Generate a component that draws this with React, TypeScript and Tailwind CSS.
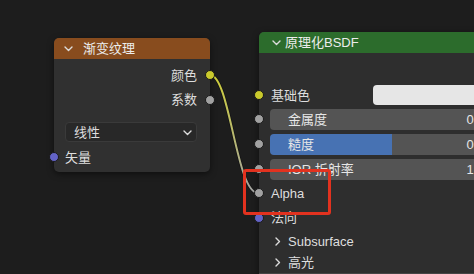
import React from 'react';

const font = { fontFamily: '"Liberation Sans", "Noto Sans CJK SC", sans-serif' };

const Chevron = ({ dir = 'down' }: { dir?: 'down' | 'right' }) => (
  <svg width="9" height="9" viewBox="0 0 9 9" className="shrink-0">
    {dir === 'down' ? (
      <polyline points="1,3 4.5,6.5 8,3" fill="none" stroke="#dcdcdc" strokeWidth="1.4" strokeLinecap="round" strokeLinejoin="round" />
    ) : (
      <polyline points="3,1 6.5,4.5 3,8" fill="none" stroke="#dcdcdc" strokeWidth="1.4" strokeLinecap="round" strokeLinejoin="round" />
    )}
  </svg>
);

const Socket = ({ color, side }: { color: string; side: 'left' | 'right' }) => (
  <span
    className={`absolute top-1/2 -translate-y-1/2 w-[10px] h-[10px] rounded-full border border-[#1a1a1a] ${
      side === 'left' ? 'left-[-5px]' : 'right-[-5px]'
    } ${color}`}
  />
);

const ValueField = ({ label, value, fill }: { label: string; value: string; fill?: boolean }) => (
  <div
    className={`ml-[11px] w-[235px] h-[21px] rounded-[4px] flex items-center justify-between pl-[18px] pr-[6px] text-[#e6e6e6] ${
      fill ? 'bg-[linear-gradient(to_right,#4772b3_122px,#545454_122px)]' : 'bg-[#545454]'
    }`}
  >
    <span>{label}</span>
    <span>{value}</span>
  </div>
);

export default function App() {
  return (
    <div className="relative w-[474px] h-[274px] overflow-hidden bg-[#1d1d1d] text-[13px] leading-none" style={font}>
      {/* link wire */}
      <svg className="absolute inset-0" width="474" height="274">
        <defs>
          <linearGradient id="wire" gradientUnits="userSpaceOnUse" x1="0" y1="75" x2="0" y2="193">
            <stop offset="0" stopColor="#cfcf3a" />
            <stop offset="1" stopColor="#a3a3a3" />
          </linearGradient>
        </defs>
        <path d="M210 75 C 230 75, 236 193, 258 193" fill="none" stroke="#141414" strokeWidth="3.5" />
        <path d="M210 75 C 230 75, 236 193, 258 193" fill="none" stroke="url(#wire)" strokeWidth="2" />
      </svg>

      {/* 渐变纹理 node */}
      <div className="absolute left-[54px] top-[38px] w-[156px] h-[134px] rounded-[5px] bg-[#303030] shadow-[0_2px_6px_rgba(0,0,0,0.5)] flex flex-col text-[#dedede]">
        <div className="h-[21px] rounded-t-[5px] bg-[#884c1e] flex items-center gap-[10px] pl-[10px] text-[#ececec]">
          <Chevron />
          <span>渐变纹理</span>
        </div>
        <div className="flex flex-col pt-[4px]">
          <div className="relative h-[24px] flex items-center justify-end pr-[13px]">
            <span>颜色</span>
            <Socket color="bg-[#c9c92c]" side="right" />
          </div>
          <div className="relative h-[25px] flex items-center justify-end pr-[13px]">
            <span>系数</span>
            <Socket color="bg-[#a1a1a1]" side="right" />
          </div>
          <div className="mt-[10px] ml-[11px] mr-[13px] h-[20px] rounded-[4px] bg-[#282828] border border-[#3a3a3a] flex items-center justify-between pl-[8px] pr-[4px]">
            <span>线性</span>
            <Chevron />
          </div>
          <div className="relative mt-[3px] h-[24px] flex items-center pl-[11px]">
            <Socket color="bg-[#6363c7]" side="left" />
            <span>矢量</span>
          </div>
        </div>
      </div>

      {/* 原理化BSDF node */}
      <div className="absolute left-[259px] top-[32px] w-[253px] h-[260px] rounded-[5px] bg-[#2e2e2e] shadow-[0_2px_6px_rgba(0,0,0,0.5)] flex flex-col text-[#dedede]">
        <div className="h-[21px] rounded-t-[5px] bg-[#2c6c2c] flex items-center gap-[4px] pl-[13px] text-[#ececec]">
          <Chevron />
          <span>原理化BSDF</span>
        </div>
        <div className="flex flex-col pt-[30px]">
          <div className="relative h-[24px] flex items-center pl-[12px]">
            <Socket color="bg-[#c9c92c]" side="left" />
            <span className="flex-1">基础色</span>
            <div className="w-[139px] h-[20px] rounded-[4px] bg-[#e6e6e6]" />
          </div>
          <div className="relative h-[24px] flex items-center pt-[1px]">
            <Socket color="bg-[#a1a1a1]" side="left" />
            <ValueField label="金属度" value="0.000" />
          </div>
          <div className="relative h-[25px] flex items-center pt-[1px]">
            <Socket color="bg-[#a1a1a1]" side="left" />
            <ValueField label="糙度" value="0.500" fill />
          </div>
          <div className="relative h-[25px] flex items-center pt-[1px]">
            <Socket color="bg-[#a1a1a1]" side="left" />
            <ValueField label="IOR 折射率" value="1.450" />
          </div>
          <div className="relative h-[24px] flex items-center pl-[12px]">
            <Socket color="bg-[#a1a1a1]" side="left" />
            <span>Alpha</span>
          </div>
          <div className="relative h-[25px] flex items-center pl-[12px]">
            <Socket color="bg-[#6363c7]" side="left" />
            <span>法向</span>
          </div>
          <div className="h-[22px] flex items-center gap-[6px] pl-[14px]">
            <Chevron dir="right" />
            <span>Subsurface</span>
          </div>
          <div className="h-[22px] flex items-center gap-[6px] pl-[14px] border-b border-[#454545]">
            <Chevron dir="right" />
            <span>高光</span>
          </div>
        </div>
      </div>

      {/* highlight box */}
      <div className="absolute left-[243px] top-[169px] w-[88px] h-[46px] rounded-[3px] border-[3px] border-[#e2321f]" />
    </div>
  );
}
